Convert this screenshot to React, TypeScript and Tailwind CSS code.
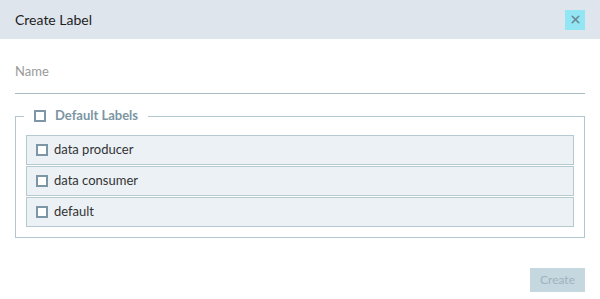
import { X } from 'lucide-react';

const labels = ['data producer', 'data consumer', 'default'];

function Box() {
  return <span className="inline-block w-[12px] h-[12px] border-2 border-[#7c96a5] bg-white shrink-0" />;
}

export default function App() {
  return (
    <div className="w-[600px] h-[299px] bg-white flex flex-col font-['Lato',sans-serif] overflow-hidden">
      <div className="h-[39px] bg-[#dee5ec] flex items-center justify-between pl-[15px] pr-[15px]">
        <span className="text-[14px] text-[#1e1e1e]">Create Label</span>
        <button className="w-[20px] h-[20px] bg-[#92e6f4] flex items-center justify-center text-[#6c8796]">
          <X size={13} strokeWidth={3} />
        </button>
      </div>

      <div className="px-[15px]">
        <div className="h-[55px] flex items-end border-b border-[#a8bbc3] pb-[12px] text-[13px] text-[#999]">Name</div>

        <fieldset className="mt-[13px] border border-[#b2c6cf] px-[10px] pb-[10px] pt-[10px]">
          <legend className="ml-[-2px] px-[10px] flex items-center gap-[9px] h-[18px]">
            <Box />
            <span className="text-[13px] font-bold text-[#7b95a3]">Default Labels</span>
          </legend>
          <div className="flex flex-col gap-px">
            {labels.map((l) => (
              <div key={l} className="h-[30px] bg-[#ecf1f5] border border-[#b5c9d1] flex items-center gap-[6px] pl-[9px]">
                <Box />
                <span className="text-[13px] text-[#333]">{l}</span>
              </div>
            ))}
          </div>
        </fieldset>

        <div className="flex justify-end mt-[30px]">
          <button className="w-[55px] h-[24px] bg-[#c5d7df] text-[#9fb3bd] text-[12px]">Create</button>
        </div>
      </div>
    </div>
  );
}
